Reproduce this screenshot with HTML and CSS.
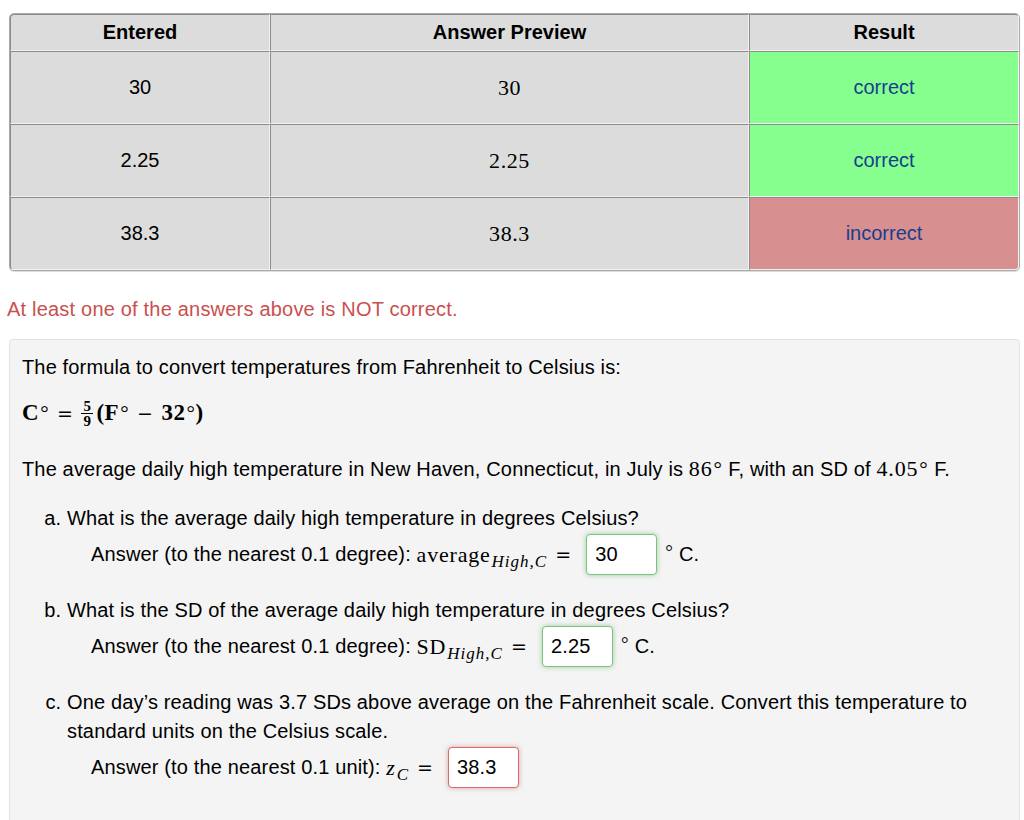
FILE: index.html
```html
<!DOCTYPE html>
<html>
<head>
<meta charset="utf-8">
<title>Attempt results</title>
<link rel="stylesheet" href="styles.css">
</head>
<body>
<div class="page">
  <table class="results">
    <colgroup><col class="c1"><col class="c2"><col class="c3"></colgroup>
    <thead>
      <tr><th>Entered</th><th>Answer Preview</th><th class="tr">Result</th></tr>
    </thead>
    <tbody>
      <tr><td>30</td><td class="mathcell">30</td><td class="res ok">correct</td></tr>
      <tr><td>2.25</td><td class="mathcell">2.25</td><td class="res ok">correct</td></tr>
      <tr><td class="bl">38.3</td><td class="mathcell">38.3</td><td class="res bad br">incorrect</td></tr>
    </tbody>
  </table>

  <p class="warn">At least one of the answers above is NOT correct.</p>

  <div class="problem">
    <p class="intro">The formula to convert temperatures from Fahrenheit to Celsius is:</p>
    <p class="formula"><span class="bf">C<span class="deg">°</span></span><span class="op">=</span><span class="frac"><span class="num">5</span><span class="den">9</span></span><span class="bf">(F<span class="deg">°</span></span><span class="op">−</span><span class="bf">32<span class="deg">°</span>)</span></p>
    <p class="stmt">The average daily high temperature in New Haven, Connecticut, in July is <span class="m">86<span class="deg">°</span></span> F, with an SD of <span class="m">4.05<span class="deg">°</span></span> F.</p>
    <ol class="parts">
      <li>
        <div class="q">What is the average daily high temperature in degrees Celsius?</div>
        <div class="ans">Answer (to the nearest 0.1 degree):&nbsp;<span class="m">average<sub class="sub">High,C</sub></span><span class="eq">=</span><span class="field good">30</span><span class="unitdeg">°</span><span class="unit">C.</span></div>
      </li>
      <li>
        <div class="q">What is the SD of the average daily high temperature in degrees Celsius?</div>
        <div class="ans">Answer (to the nearest 0.1 degree):&nbsp;<span class="m">SD<sub class="sub">High,C</sub></span><span class="eq">=</span><span class="field good">2.25</span><span class="unitdeg">°</span><span class="unit">C.</span></div>
      </li>
      <li>
        <div class="q">One day’s reading was 3.7 SDs above average on the Fahrenheit scale. Convert this temperature to standard units on the Celsius scale.</div>
        <div class="ans">Answer (to the nearest 0.1 unit):&nbsp;<span class="m"><i>z</i><sub class="sub">C</sub></span><span class="eq">=</span><span class="field wrong">38.3</span></div>
      </li>
    </ol>
  </div>
</div>
</body>
</html>
```

FILE: styles.css
```css
html, body {
  margin: 0;
  padding: 0;
  background: #ffffff;
}

body {
  font-family: "Liberation Sans", Arial, Helvetica, sans-serif;
  font-size: 20px;
  color: #000;
}

.page {
  padding: 13px 0 0 9px;
  width: 1011px;
}

/* ---------- results table ---------- */
table.results {
  width: 1011px;
  table-layout: fixed;
  border-collapse: separate;
  border-spacing: 0;
  border: 1px solid #a9a9a9;
  border-radius: 5px;
  background: #dcdcdc;
  box-shadow: 0 1px 1px rgba(0,0,0,0.15);
}

col.c1 { width: 260px; }
col.c2 { width: 479px; }
col.c3 { width: 270px; }

table.results th,
table.results td {
  border-style: solid;
  border-width: 1px;
  border-color: #8c8c8c #f2f2f2 #f2f2f2 #8c8c8c;
  background: #dcdcdc;
  text-align: center;
  vertical-align: middle;
  padding: 0;
}

table.results th {
  height: 35px;
  font-weight: bold;
  font-size: 20px;
}

table.results th:first-child { border-top-left-radius: 4px; }
table.results th.tr { border-top-right-radius: 4px; }
table.results td.bl { border-bottom-left-radius: 4px; }
table.results td.br { border-bottom-right-radius: 4px; }

table.results td {
  height: 71px;
}

table.results td.mathcell {
  font-family: "Liberation Serif", "Times New Roman", serif;
  font-size: 22px;
  letter-spacing: 0.6px;
}

table.results td.res {
  color: #173e8e;
}

table.results td.ok { background: #86ff8e; }
table.results td.bad { background: #d78f8f; }

/* ---------- warning ---------- */
.warn {
  margin: 25px 0 0 -2px;
  line-height: 26px;
  color: #c9504e;
  letter-spacing: 0.2px;
}

/* ---------- problem box ---------- */
.problem {
  margin-top: 17px;
  border: 1px solid #e2e2e2;
  border-radius: 4px;
  background: #f4f4f4;
  padding: 14px 12px 30px 12px;
  line-height: 27px;
  letter-spacing: 0.15px;
}

.problem p { margin: 0; }

.intro { margin-bottom: 14px !important; }

.formula {
  height: 36px;
  display: flex;
  align-items: center;
  margin-bottom: 24px !important;
  font-family: "Liberation Serif", "Times New Roman", serif;
  font-size: 23px;
  letter-spacing: 0.5px;
}

.bf { font-weight: bold; }

.deg {
  font-weight: normal;
  font-size: 21px;
  margin-left: 1px;
}

.op {
  font-family: "DejaVu Sans", sans-serif;
  font-weight: normal;
  font-size: 19px;
  margin: 0 8px;
}

.frac {
  display: inline-flex;
  flex-direction: column;
  align-items: center;
  font-size: 15px;
  line-height: 14px;
  font-weight: bold;
  margin-right: 3px;
}

.frac .num {
  border-bottom: 1px solid #000;
  padding: 0 2px;
}

.m {
  font-family: "Liberation Serif", "Times New Roman", serif;
  font-size: 22px;
  letter-spacing: 0.8px;
}

/* ---------- parts list ---------- */
ol.parts {
  list-style-type: lower-alpha;
  margin: 21px 0 0 0;
  padding-left: 45px;
  line-height: 29px;
}

ol.parts li {
  margin-bottom: 21px;
}

.ans {
  display: flex;
  align-items: center;
  height: 42px;
  margin-left: 24px;
  white-space: nowrap;
}

.sub {
  font-style: italic;
  font-size: 17px;
  vertical-align: -5px;
  line-height: 0;
  margin-left: 1px;
  letter-spacing: 1px;
}

.eq {
  font-family: "DejaVu Sans", sans-serif;
  font-size: 19px;
  margin: 0 9px 0 8px;
}

.field {
  box-sizing: border-box;
  display: inline-flex;
  align-items: center;
  width: 71px;
  height: 41px;
  padding-left: 8px;
  background: #fff;
  border-radius: 4px;
  font-size: 20px;
  margin-left: 6px;
}

.field.good {
  border: 1px solid #7cc47c;
  box-shadow: 0 0 5px rgba(70, 170, 70, 0.5);
}

.field.wrong {
  border: 1px solid #d46b6d;
  box-shadow: 0 0 5px rgba(210, 80, 80, 0.5);
}

.unitdeg {
  font-family: "Liberation Serif", "Times New Roman", serif;
  font-size: 19px;
  margin: 0 0 0 8px;
  position: relative;
  top: -3px;
}

.unit {
  margin-left: 6px;
}
```
